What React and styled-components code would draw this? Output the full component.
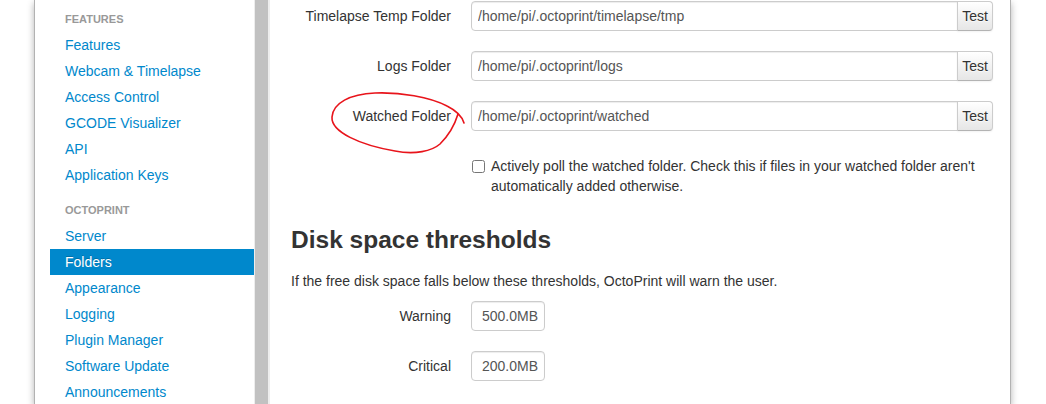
import styled, { createGlobalStyle } from "styled-components";

//  //  //  STYLED-COMPONENTS   //  //  //

const GlobalStyle = createGlobalStyle`
	html, body {
		margin: 0;
		padding: 0;
		background: #fff;
	}
	body {
		font-family: "Liberation Sans", Arial, Helvetica, sans-serif;
		font-size: 14px;
		line-height: 20px;
		color: #333;
	}
`;

const Page = styled.div`
	height: 404px;
	overflow: hidden;
	padding-left: 34px;
	box-sizing: border-box;
`;

const Modal = styled.div`
	box-sizing: border-box;
	width: 977px;
	height: 404px;
	display: flex;
	background: #fff;
	border-left: 1px solid rgba(0, 0, 0, 0.3);
	border-right: 1px solid rgba(0, 0, 0, 0.3);
	box-shadow: 0 3px 7px rgba(0, 0, 0, 0.3);
`;

const Sidebar = styled.div`
	width: 204px;
	padding-left: 15px;
	flex-shrink: 0;
`;

const NavList = styled.ul`
	margin: 0;
	padding: 6px 0 0;
	list-style: none;
`;

const NavHeader = styled.li`
	margin-top: ${(p) => (p.$gap ? "9px" : "0")};
	padding: 3px 15px;
	font-size: 11px;
	font-weight: bold;
	line-height: 20px;
	color: #999;
	text-transform: uppercase;
	text-shadow: 0 1px 0 rgba(255, 255, 255, 0.5);
`;

const NavLink = styled.a`
	display: block;
	padding: 3px 15px;
	text-decoration: none;
	color: ${(p) => (p.$active ? "#fff" : "#0088cc")};
	background: ${(p) => (p.$active ? "#0088cc" : "transparent")};
	text-shadow: ${(p) => (p.$active ? "0 -1px 0 rgba(0, 0, 0, 0.2)" : "none")};
`;

const ScrollTrack = styled.div`
	width: 16px;
	flex-shrink: 0;
	padding: 0 2px 0 1px;
	box-sizing: border-box;
	background: #ededed;
`;

const ScrollThumb = styled.div`
	height: 100%;
	background: #c1c1c1;
`;

const Content = styled.div`
	position: relative;
	flex: 1;
	display: flex;
	flex-direction: column;
	padding: 1px 17px 0 21px;
`;

const ControlGroup = styled.div`
	display: flex;
	margin-bottom: 20px;
`;

const Label = styled.label`
	width: 160px;
	flex-shrink: 0;
	margin-right: 20px;
	padding-top: 5px;
	text-align: right;
	color: #333;
`;

const Controls = styled.div`
	flex: 1;
	display: flex;
`;

const InputAppend = styled.div`
	display: flex;
	width: 100%;
`;

const TextInput = styled.input`
	box-sizing: border-box;
	height: 30px;
	padding: 4px 6px;
	flex: ${(p) => (p.$small ? "none" : "1")};
	width: ${(p) => (p.$small ? "74px" : "auto")};
	min-width: 0;
	font: 14px/20px "Liberation Sans", Arial, sans-serif;
	color: #555;
	text-align: ${(p) => (p.$small ? "right" : "left")};
	background: #fff;
	border: 1px solid #ccc;
	border-radius: ${(p) => (p.$small ? "4px" : "4px 0 0 4px")};
	box-shadow: inset 0 1px 1px rgba(0, 0, 0, 0.075);
	outline: none;
`;

const AddOnButton = styled.button`
	box-sizing: border-box;
	width: 36px;
	height: 30px;
	margin-left: -1px;
	padding: 0;
	font: 14px/20px "Liberation Sans", Arial, sans-serif;
	color: #333;
	text-shadow: 0 1px 1px rgba(255, 255, 255, 0.75);
	background: linear-gradient(to bottom, #ffffff, #e6e6e6);
	border: 1px solid #ccc;
	border-bottom-color: #b3b3b3;
	border-radius: 0 4px 4px 0;
	box-shadow: inset 0 1px 0 rgba(255, 255, 255, 0.2), 0 1px 2px rgba(0, 0, 0, 0.05);
`;

const CheckLabel = styled.label`
	display: block;
	min-height: 20px;
	padding: 5px 0 0 20px;
	color: #333;
`;

const Checkbox = styled.input`
	float: left;
	width: 13px;
	height: 13px;
	margin: 4px 0 0 -19px;
`;

const SectionTitle = styled.h3`
	margin: 4px 0 11px;
	font-size: 24.5px;
	line-height: 40px;
	font-weight: bold;
	color: #333;
`;

const Help = styled.p`
	margin: 0 0 10px;
`;

const Scribble = styled.svg`
	position: absolute;
	top: 0;
	left: 0;
	width: 100%;
	height: 100%;
	pointer-events: none;
`;

//  //  //  VARIABLES   //  //  //

const navSections = [
	{
		title: "Features",
		items: ["Features", "Webcam & Timelapse", "Access Control", "GCODE Visualizer", "API", "Application Keys"],
	},
	{
		title: "OctoPrint",
		items: ["Server", "Folders", "Appearance", "Logging", "Plugin Manager", "Software Update", "Announcements"],
	},
];

const folders = [
	{ label: "Timelapse Temp Folder", path: "/home/pi/.octoprint/timelapse/tmp" },
	{ label: "Logs Folder", path: "/home/pi/.octoprint/logs" },
	{ label: "Watched Folder", path: "/home/pi/.octoprint/watched" },
];

const thresholds = [
	{ label: "Warning", value: "500.0MB" },
	{ label: "Critical", value: "200.0MB" },
];

//  //  //  FUNCTION    //  //  //

export default function App() {
	return (
		<>
			<GlobalStyle />
			<Page>
				<Modal>
					<Sidebar>
						<NavList>
							{navSections.map((s, si) => [
								<NavHeader key={s.title} $gap={si > 0}>{s.title}</NavHeader>,
								...s.items.map((i) => (
									<li key={i}>
										<NavLink href="#" $active={i === "Folders"}>{i}</NavLink>
									</li>
								)),
							])}
						</NavList>
					</Sidebar>

					<ScrollTrack>
						<ScrollThumb />
					</ScrollTrack>

					<Content>
						{folders.map((f) => (
							<ControlGroup key={f.label}>
								<Label>{f.label}</Label>
								<Controls>
									<InputAppend>
										<TextInput type="text" defaultValue={f.path} />
										<AddOnButton>Test</AddOnButton>
									</InputAppend>
								</Controls>
							</ControlGroup>
						))}

						<ControlGroup>
							<Label />
							<Controls>
								<CheckLabel>
									<Checkbox type="checkbox" />
									Actively poll the watched folder. Check this if files in your watched folder aren't automatically added otherwise.
								</CheckLabel>
							</Controls>
						</ControlGroup>

						<SectionTitle>Disk space thresholds</SectionTitle>
						<Help>If the free disk space falls below these thresholds, OctoPrint will warn the user.</Help>

						{thresholds.map((t) => (
							<ControlGroup key={t.label}>
								<Label>{t.label}</Label>
								<Controls>
									<TextInput type="text" $small defaultValue={t.value} />
								</Controls>
							</ControlGroup>
						))}

						<Scribble>
							<path
								d="M194 123 C192 116, 185 110, 177 106 C160 97, 130 92, 105 93 C80 94, 63 103, 62 117 C61 132, 90 145, 125 151 C145 155, 162 151, 170 144 C180 134, 185 124, 188 114"
								fill="none"
								stroke="#e8141b"
								strokeWidth="1.6"
								strokeLinecap="round"
							/>
						</Scribble>
					</Content>
				</Modal>
			</Page>
		</>
	);
}
